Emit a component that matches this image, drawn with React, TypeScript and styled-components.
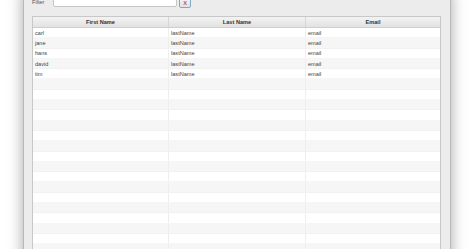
import React from 'react';
import styled, { createGlobalStyle } from 'styled-components';

const GlobalStyle = createGlobalStyle`
  html, body {
    margin: 0;
    padding: 0;
    background: #ffffff;
  }
  body {
    font-family: "Liberation Sans", Arial, sans-serif;
  }
`;

const people = [
  { first: 'carl', last: 'lastName', email: 'email' },
  { first: 'jane', last: 'lastName', email: 'email' },
  { first: 'hans', last: 'lastName', email: 'email' },
  { first: 'david', last: 'lastName', email: 'email' },
  { first: 'tim', last: 'lastName', email: 'email' },
];

const EMPTY_ROWS = 20;

const Stage = styled.div`
  width: 474px;
  height: 249px;
  overflow: hidden;
  padding-left: 23px;
  box-sizing: border-box;
`;

const Window = styled.div`
  width: 428px;
  height: 280px;
  margin-top: -10px;
  box-sizing: border-box;
  background: #ececec;
  border: 1px solid #b9b9b9;
  box-shadow: 0 0 14px rgba(0, 0, 0, 0.35);
  padding: 6px 9px 0 8px;
  display: flex;
  flex-direction: column;
`;

const FilterRow = styled.div`
  display: flex;
  align-items: center;
  height: 10px;
  margin-bottom: 9px;
`;

const FilterLabel = styled.span`
  font-size: 5.6px;
  color: #555;
  width: 21px;
`;

const FilterInput = styled.div`
  width: 124px;
  height: 10px;
  box-sizing: border-box;
  background: #ffffff;
  border: 1px solid #c6c6c6;
  border-radius: 2px;
`;

const ClearButton = styled.div`
  width: 12px;
  height: 11px;
  margin-left: 2px;
  margin-top: 1px;
  box-sizing: border-box;
  border: 1px solid #7fa9c4;
  border-radius: 2px;
  background: linear-gradient(#f4f4f4, #e2e2e2);
  display: flex;
  align-items: center;
  justify-content: center;
  font-size: 5.6px;
  font-weight: bold;
  color: #b05a6a;
`;

const Table = styled.div`
  flex: 1;
  background: #ffffff;
  border: 1px solid #c8c8c8;
  border-bottom: none;
`;

const Row = styled.div<{ $striped?: boolean }>`
  display: grid;
  grid-template-columns: 136px 137px 1fr;
  height: 10.3px;
  background: ${(p) => (p.$striped ? '#f6f6f6' : '#ffffff')};
  border-bottom: 1px solid ${(p) => (p.$striped ? '#f1f1f1' : '#f6f6f6')};
  box-sizing: border-box;
`;

const HeaderRow = styled.div`
  display: grid;
  grid-template-columns: 136px 137px 1fr;
  height: 11px;
  background: linear-gradient(#f3f3f3, #e2e2e2);
  border-bottom: 1px solid #cfcfcf;
  box-sizing: border-box;
`;

const HeaderCell = styled.div`
  display: flex;
  align-items: center;
  justify-content: center;
  font-size: 5.6px;
  font-weight: bold;
  color: #333;
  border-right: 1px solid #d6d6d6;
  &:last-child {
    border-right: none;
  }
`;

const Cell = styled.div`
  display: flex;
  align-items: center;
  padding-left: 2px;
  font-size: 5.6px;
  color: #444;
  border-right: 1px solid #eeeeee;
  white-space: nowrap;
  &:last-child {
    border-right: none;
  }
`;

const App: React.FC = () => {
  const blanks = Array.from({ length: EMPTY_ROWS });
  return (
    <>
      <GlobalStyle />
      <Stage>
        <Window>
          <FilterRow>
            <FilterLabel>Filter</FilterLabel>
            <FilterInput />
            <ClearButton>X</ClearButton>
          </FilterRow>
          <Table>
            <HeaderRow>
              <HeaderCell>First Name</HeaderCell>
              <HeaderCell>Last Name</HeaderCell>
              <HeaderCell>Email</HeaderCell>
            </HeaderRow>
            {people.map((p, i) => (
              <Row key={p.first} $striped={i % 2 === 1}>
                <Cell>{p.first}</Cell>
                <Cell>{p.last}</Cell>
                <Cell>{p.email}</Cell>
              </Row>
            ))}
            {blanks.map((_, i) => (
              <Row key={'b' + i} $striped={(i + people.length) % 2 === 1}>
                <Cell />
                <Cell />
                <Cell />
              </Row>
            ))}
          </Table>
        </Window>
      </Stage>
    </>
  );
};

export default App;
